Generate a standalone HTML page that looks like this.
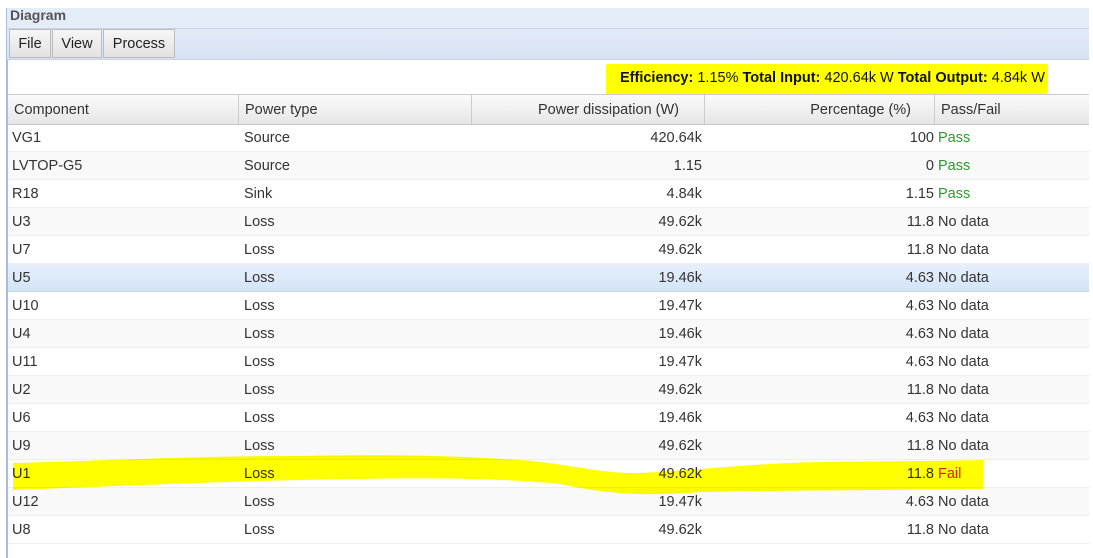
<!DOCTYPE html>
<html><head><style>
*{margin:0;padding:0;box-sizing:border-box}
body{width:1093px;height:558px;background:#fff;font-family:"Liberation Sans",Arial,sans-serif;font-size:14.5px;color:#333;position:relative;overflow:hidden}
.title{position:absolute;left:7px;top:8px;width:1082px;height:21px;background:#e4ecf8;border-bottom:1px solid #c8d4e6;font-weight:bold;font-size:14px;color:#555;line-height:14px}
.tb{position:absolute;left:7px;top:29px;width:1082px;height:31px;background:linear-gradient(#e3ebf8,#d6e2f4);border-bottom:1px solid #c9d3e2}
.btn{position:absolute;top:0;height:29px;background:linear-gradient(#f6f6f6,#e2e2e2);border:1px solid #bbb;line-height:29px;text-align:center;color:#222;font-size:14.5px}
.lb{position:absolute;left:6px;top:8px;width:2px;height:550px;background:#a9bcdc}
.hl{position:absolute;background:#ffff00}
.eff{position:absolute;left:620px;top:70px;font-size:14.5px;color:#111;white-space:nowrap}
.hdr{position:absolute;left:8px;top:94px;width:1081px;height:31px;background:linear-gradient(#fafafa,#e6e6e6);border-top:1px solid #ccc;border-bottom:1px solid #c8c8c8}
.hdr div{position:absolute;top:0;height:29px;line-height:30px;border-right:1px solid #ccc;color:#333;padding:0 6px}
.row{position:absolute;left:8px;width:1081px;height:28px;line-height:28px;border-bottom:1px solid #eee}
.row span{position:absolute;top:0}
.g{background:#f9f9f9}
.sel{background:linear-gradient(#e6f0fb,#d3e4f7);border-bottom:1px solid #c5d8ef}
.pass{color:#2a9a2a}.fail{color:#e02020}
</style></head><body>
<div class="lb"></div>
<div class="title"><span style="position:relative;left:3px;top:0px">Diagram</span></div>
<div class="tb">
<div class="btn" style="left:2px;width:42px">File</div>
<div class="btn" style="left:45px;width:50px">View</div>
<div class="btn" style="left:96px;width:72px">Process</div>
</div>
<div class="hl" style="left:606px;top:64px;width:442px;height:33px;border-radius:2px 2px 8px 2px"></div>
<div class="eff"><b>Efficiency:</b> 1.15% <b>Total Input:</b> 420.64k W <b>Total Output:</b> 4.84k W</div>
<div class="hdr">
<div style="left:0;width:231px">Component</div>
<div style="left:231px;width:233px">Power type</div>
<div style="left:464px;width:233px;text-align:right;padding-right:25px">Power dissipation (W)</div>
<div style="left:697px;width:230px;text-align:right;padding-right:23px">Percentage (%)</div>
<div style="left:927px;width:154px;border-right:none">Pass/Fail</div>
</div>
<div id="rows"></div>
<svg style="position:absolute;left:0;top:0;mix-blend-mode:multiply" width="1093" height="558"><path d="M13 463 C120 460 200 456 300 456 C400 454 460 456 520 460 C570 464 600 474 640 473 C700 470 760 463 820 462 C900 461 950 461 983 460 L983 489 C900 490 800 490 700 492 C650 496 610 495 560 484 C500 478 430 477 300 480 C200 482 100 487 13 490 Z" fill="#ffff00"/></svg>
<script>
var d=[["VG1","Source","420.64k","100","Pass"],["LVTOP-G5","Source","1.15","0","Pass"],["R18","Sink","4.84k","1.15","Pass"],["U3","Loss","49.62k","11.8","No data"],["U7","Loss","49.62k","11.8","No data"],["U5","Loss","19.46k","4.63","No data"],["U10","Loss","19.47k","4.63","No data"],["U4","Loss","19.46k","4.63","No data"],["U11","Loss","19.47k","4.63","No data"],["U2","Loss","49.62k","11.8","No data"],["U6","Loss","19.46k","4.63","No data"],["U9","Loss","49.62k","11.8","No data"],["U1","Loss","49.62k","11.8","Fail"],["U12","Loss","19.47k","4.63","No data"],["U8","Loss","49.62k","11.8","No data"]];
var h="";d.forEach(function(r,i){var c=i==5?"sel":(i%2?"g":"");var pc=r[4]=="Pass"?"pass":(r[4]=="Fail"?"fail":"");
h+='<div class="row '+c+'" style="top:'+(124+i*28)+'px"><span style="left:4px">'+r[0]+'</span><span style="left:236px">'+r[1]+'</span><span style="right:387px">'+r[2]+'</span><span style="right:155px">'+r[3]+'</span><span class="'+pc+'" style="left:930px">'+r[4]+'</span></div>';});
document.getElementById("rows").innerHTML=h;
</script>
</body></html>
